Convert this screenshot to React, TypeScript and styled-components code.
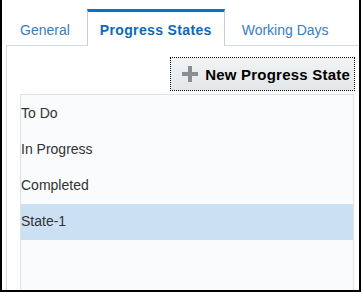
import React, { useState } from "react";
import styled, { createGlobalStyle } from "styled-components";

const GlobalStyle = createGlobalStyle`
    html, body {
        margin: 0;
        padding: 0;
        background: #ffffff;
    }
    body {
        font-family: "Liberation Sans", Arial, sans-serif;
    }
`;

const Frame = styled.div`
    box-sizing: border-box;
    width: 361px;
    height: 292px;
    border: 2px solid #000;
    border-top: none;
    background: #fff;
    overflow: hidden;
    display: flex;
    flex-direction: column;
    padding-left: 4px;
`;

const TabBar = styled.div`
    display: flex;
    gap: 3px;
    margin-top: 9px;
    position: relative;
    z-index: 1;
`;

const Tab = styled.div<{ $active?: boolean }>`
    box-sizing: border-box;
    height: 37px;
    padding: 3px ${(p) => (p.$active ? "12px" : "13px")} 0;
    line-height: 30px;
    font-size: 14px;
    cursor: pointer;
    white-space: nowrap;
    border: 1px solid transparent;
    border-top: 3px solid transparent;
    border-bottom: none;
    color: #3a7cc1;
    margin-bottom: -1px;
    ${(p) =>
        p.$active &&
        `
        background: #fff;
        color: #0b69bd;
        font-weight: bold;
        letter-spacing: 0.35px;
        border-color: #c6cfd7;
        border-top-color: #0572ce;
    `}
`;

const Panel = styled.div`
    flex: 1;
    display: flex;
    flex-direction: column;
    border: 1px solid #d2d9df;
    margin-right: -9px;
    margin-bottom: -20px;
    padding: 11px 13px 0 13px;
`;

const Toolbar = styled.div`
    display: flex;
    justify-content: flex-end;
    padding-top: 1px;
`;

const Button = styled.button`
    display: flex;
    align-items: center;
    gap: 7px;
    height: 32px;
    padding: 0 4px 0 11px;
    border: none;
    outline: 1px dotted #000;
    outline-offset: 0;
    background: linear-gradient(#f1f3f4, #e3e7ea);
    font-family: "Liberation Sans", Arial, sans-serif;
    font-size: 15px;
    font-weight: bold;
    letter-spacing: 0.22px;
    color: #000;
    cursor: pointer;
`;

const List = styled.div`
    flex: 1;
    margin-top: 4px;
    border: 1px solid #dde3e8;
    background: #f9fbfd;
    padding-top: 1px;
`;

const Row = styled.div<{ $selected?: boolean }>`
    height: 36px;
    line-height: 34px;
    padding-bottom: 2px;
    box-sizing: border-box;
    font-size: 14px;
    color: #333;
    background: ${(p) => (p.$selected ? "#cce0f4" : "transparent")};
    cursor: default;
`;

const PlusIcon = () => (
    <svg width="16" height="16" viewBox="0 0 16 16">
        <rect x="6" y="0" width="4" height="16" fill="#8a8e92" />
        <rect x="0" y="6" width="16" height="4" fill="#8a8e92" />
    </svg>
);

const tabs = ["General", "Progress States", "Working Days"];
const states = ["To Do", "In Progress", "Completed", "State-1"];

export default function App() {
    const [tab, setTab] = useState(1);
    const [selected, setSelected] = useState(3);

    return (
        <>
            <GlobalStyle />
            <Frame>
                <TabBar>
                    {tabs.map((label, i) => (
                        <Tab key={label} $active={i === tab} onClick={() => setTab(i)}>
                            {label}
                        </Tab>
                    ))}
                </TabBar>
                <Panel>
                    <Toolbar>
                        <Button>
                            <PlusIcon />
                            New Progress State
                        </Button>
                    </Toolbar>
                    <List>
                        {states.map((s, i) => (
                            <Row key={s} $selected={i === selected} onClick={() => setSelected(i)}>
                                {s}
                            </Row>
                        ))}
                    </List>
                </Panel>
            </Frame>
        </>
    );
}
